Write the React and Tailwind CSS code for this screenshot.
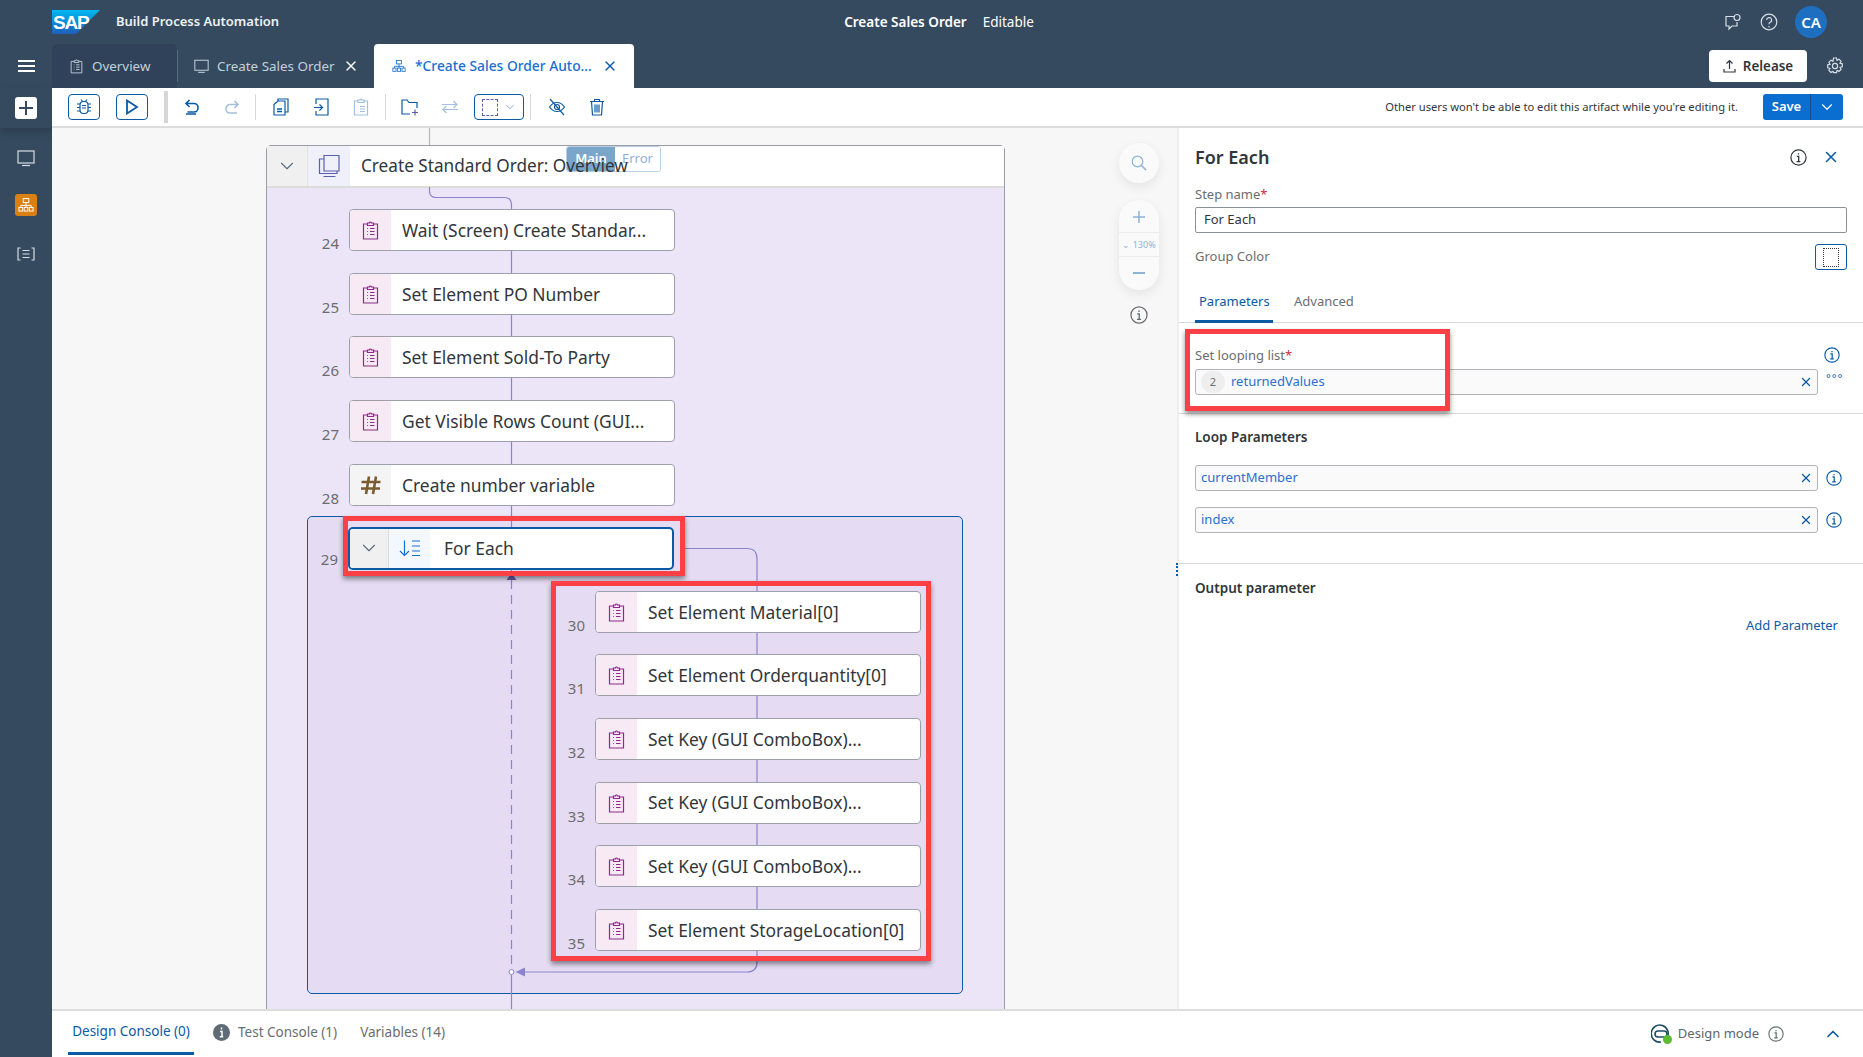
import { ChevronDown, ChevronUp, X } from 'lucide-react';

const STEPS = [
  { n: 24, label: 'Wait (Screen) Create Standar...' },
  { n: 25, label: 'Set Element PO Number' },
  { n: 26, label: 'Set Element Sold-To Party' },
  { n: 27, label: 'Get Visible Rows Count (GUI...' },
];

const LOOP_STEPS = [
  { n: 30, label: 'Set Element Material[0]' },
  { n: 31, label: 'Set Element Orderquantity[0]' },
  { n: 32, label: 'Set Key (GUI ComboBox)...' },
  { n: 33, label: 'Set Key (GUI ComboBox)...' },
  { n: 34, label: 'Set Key (GUI ComboBox)...' },
  { n: 35, label: 'Set Element StorageLocation[0]' },
];

function Svg({ w = 16, h = 16, vb, className = '', children }) {
  return (
    <svg width={w} height={h} viewBox={vb || `0 0 ${w} ${h}`} fill="none" stroke="currentColor" strokeWidth="1.2" className={className}>
      {children}
    </svg>
  );
}

const ClipboardIcon = ({ className = 'text-[#8d2a8b]', w = 17, h = 20 }) => (
  <Svg w={w} h={h} vb="0 0 17 20" className={className}>
    <path d="M5.5 4H1.5v15h14V4h-4" />
    <path d="M5.5 5.5V3h2a1 1 0 0 1 2 0h2v2.5z" />
    <path d="M5 8.5h.8M5 11.5h.8M5 14.5h.8M8 8.5h4.5M8 11.5h4.5M8 14.5h4.5" />
  </Svg>
);

const InfoIcon = ({ className = 'text-[#0a5aa5]', size = 17 }) => (
  <Svg w={size} h={size} vb="0 0 17 17" className={className}>
    <circle cx="8.5" cy="8.5" r="7.6" />
    <path d="M8.5 4.2v1.4M6.8 7.4h1.9v5M6.6 12.6h3.8" strokeWidth="1.3" />
  </Svg>
);

const HierarchyIcon = ({ className = '', w = 20, h = 20 }) => (
  <Svg w={w} h={h} vb="0 0 20 20" className={className}>
    <rect x="6.5" y="2" width="7" height="5" />
    <path d="M10 7v3.5M3.5 13v-2.5h13V13M10 10.5V13" />
    <rect x="1.2" y="13" width="4.6" height="4.6" />
    <rect x="7.7" y="13" width="4.6" height="4.6" />
    <rect x="14.2" y="13" width="4.6" height="4.6" />
  </Svg>
);

const MonitorIcon = ({ className = '', w = 18, h = 17 }) => (
  <Svg w={w} h={h} vb="0 0 18 17" className={className}>
    <rect x="1" y="1" width="16" height="12" />
    <path d="M5 15.5h8" />
  </Svg>
);

function Step({ n, label }) {
  return (
    <div className="flex items-end">
      <span className="relative top-[2px] w-[40px] pr-[10px] text-right text-[15px] leading-5 text-[#6a6d70]">{n}</span>
      <div className="relative z-10 flex h-[42px] w-[326px] overflow-hidden rounded-[4px] border-[1.5px] border-[#9ca0a8] bg-white">
        <div className="flex w-[41px] shrink-0 items-center justify-center bg-[#f8eaf5]">
          <ClipboardIcon />
        </div>
        <span className="flex items-center whitespace-nowrap pl-[11px] text-[17.4px] text-[#32363a]">{label}</span>
      </div>
    </div>
  );
}

function ToolIcon({ children, className = 'text-[#0a5aa5]' }) {
  return <div className={`flex h-[26px] w-[40px] items-center justify-center ${className}`}>{children}</div>;
}

function ToolSep({ className = '' }) {
  return <div className={`h-[26px] w-px bg-[#d9d9d9] ${className}`} />;
}

function ValueField({ children }) {
  return (
    <div className="flex h-[26px] w-[623px] items-center rounded-[3px] border border-[#b0b3b8] bg-[#fafafa] pl-[5px] pr-[4px] text-[13px] text-[#2b6fd0]">
      {children}
      <X size={14} strokeWidth={2.2} className="ml-auto text-[#0a5aa5]" />
    </div>
  );
}

function Canvas() {
  return (
    <div className="relative flex-1 overflow-hidden bg-[#f7f7f7]">
      {/* connectors */}
      <svg className="absolute left-0 top-[-1px] z-[1]" width="1125" height="882" fill="none" stroke="#8b83cc" strokeWidth="1.2">
        <path d="M377.5 0V18" stroke="#b9b9b9" />
        <path d="M377.5 60V64Q377.5 70.5 384 70.5H452Q459.5 70.5 459.5 78V82" />
        <path d="M459.5 82V449" />
        <path d="M459.5 453V845" strokeDasharray="9 6" />
        <path d="M459.5 848V882" />
        <path d="M633 421.5H695Q705 421.5 705 431.5V835Q705 845 695 845H472" />
        <path d="M473 840.5V849.5L463.5 845z" fill="#8b83cc" stroke="none" />
        <path d="M459.5 446L464.5 453H454.5z" fill="#6a5fa8" stroke="none" />
        <circle cx="459.5" cy="845" r="2.5" fill="#fff" strokeWidth="1" />
      </svg>

      <div className="ml-[214px] mt-[17px] h-[900px] w-[739px] rounded-t-[5px] border-[1.5px] border-[#9a9ca6] bg-[#ece5f7]">
        {/* group header */}
        <div className="relative flex h-[42px] border-b-2 border-[#dcdcdc] bg-white">
          <div className="flex w-[41px] items-center justify-center border-r border-[#dfdfdf] bg-[#f0f0f0] text-[#5b6b7b]">
            <ChevronDown size={22} strokeWidth={1.2} />
          </div>
          <div className="flex w-[42px] items-center justify-center bg-[#eff0fa] text-[#5a5fb0]">
            <Svg w={22} h={24} vb="0 0 22 24">
              <path d="M6 1.5h15v15.500H6z" />
              <path d="M6 5H1.500v14.500H19V17M5.500 22.500h12" />
            </Svg>
          </div>
          <span className="relative z-10 flex items-center whitespace-nowrap pl-[11px] text-[17.2px] text-[#32363a]">Create Standard Order: Overview</span>
          <div className="absolute left-[299px] top-0 flex h-[26px] w-[95px] overflow-hidden rounded-[3px] border border-[#b8cfe6] text-[13px]">
            <span className="flex w-[48px] items-center justify-center bg-[#7ba6cc] font-semibold text-white">Main</span>
            <span className="flex flex-1 items-center justify-center bg-white text-[#8fb0d8]">Error</span>
          </div>
        </div>

        {/* steps */}
        <div className="flex flex-col gap-[21.7px] pl-[42px] pt-[21px]">
          {STEPS.map((s) => <Step key={s.n} {...s} />)}
          <div className="flex items-end">
            <span className="relative top-[2px] w-[40px] pr-[10px] text-right text-[15px] leading-5 text-[#6a6d70]">28</span>
            <div className="relative z-10 flex h-[42px] w-[326px] overflow-hidden rounded-[4px] border-[1.5px] border-[#9ca0a8] bg-white">
              <div className="flex w-[41px] shrink-0 items-center justify-center bg-[#f4f4f4] text-[#7a5c30]">
                <Svg w={22} h={22} vb="0 0 22 22">
                  <path d="M1.500 8h19M1 14.500h19M9 2.500L6 20M16 2.500L13 20" strokeWidth="2.6" />
                </Svg>
              </div>
              <span className="flex items-center whitespace-nowrap pl-[11px] text-[17.4px] text-[#32363a]">Create number variable</span>
            </div>
          </div>
        </div>

        {/* for each loop */}
        <div className="ml-[40px] mt-[10px] h-[478px] w-[656px] rounded-[5px] border-[1.5px] border-[#0a5aa5] bg-[#e5dcf4] pt-[10px]">
          <div className="flex items-end">
            <span className="relative top-[-1px] w-[40px] pr-[10px] text-right text-[15px] leading-5 text-[#6a6d70]">29</span>
            <div className="relative z-10 flex h-[43px] w-[326px] overflow-hidden rounded-[5px] border-[2.500px] border-[#0a5aa5] bg-white">
              <div className="flex w-[39px] shrink-0 items-center justify-center border-r border-[#dcdcdc] bg-[#f0f0f0] text-[#5b6b7b]">
                <ChevronDown size={22} strokeWidth={1.2} />
              </div>
              <div className="flex w-[41px] shrink-0 items-center justify-center bg-[#f2f8fe] text-[#1a6fd0]">
                <Svg w={22} h={18} vb="0 0 22 18">
                  <path d="M5.500 1.500v15M1 12l4.500 4.500L10 12M13 2h8M13 7h8M13 12h8M13 16.500h8" />
                </Svg>
              </div>
              <span className="flex items-center pl-[14px] text-[17.4px] text-[#32363a]">For Each</span>
            </div>
          </div>
          <div className="ml-[247px] mt-[21px] flex flex-col gap-[21.6px]">
            {LOOP_STEPS.map((s) => <Step key={s.n} {...s} />)}
          </div>
        </div>
      </div>

      {/* annotations */}
      <div className="absolute left-[291px] top-[388px] z-20 h-[60px] w-[342px] border-[5px] border-[#fb4146] shadow-[0_3px_5px_rgba(0,0,0,0.45)]" />
      <div className="absolute left-[499px] top-[453px] z-20 h-[380px] w-[380px] border-[5px] border-[#fb4146] shadow-[0_3px_5px_rgba(0,0,0,0.45)]" />

      {/* zoom controls */}
      <div className="absolute left-[1067px] top-[15px] flex h-[40px] w-[40px] items-center justify-center rounded-full bg-[#fafafa] text-[#8cb3d9] shadow-[0_4px_12px_rgba(0,0,0,0.08)]">
        <Svg w={16} h={16}>
          <circle cx="6.500" cy="6.500" r="5.300" />
          <path d="M10.500 10.500L15 15" strokeWidth="1.6" />
        </Svg>
      </div>
      <div className="absolute left-[1067px] top-[72px] flex h-[90px] w-[40px] flex-col rounded-full bg-[#fafafa] text-[#8cb3d9] shadow-[0_4px_12px_rgba(0,0,0,0.08)]">
        <div className="flex h-[32px] items-center justify-center pt-[2px]">
          <Svg w={12} h={12}><path d="M6 0v12M0 6h12" strokeWidth="1.5" /></Svg>
        </div>
        <div className="flex h-[25px] items-center justify-center whitespace-nowrap border-y border-[#ececec] text-[9px]">⌄ 130%</div>
        <div className="flex flex-1 items-center justify-center pb-[2px]">
          <Svg w={12} h={12}><path d="M0 6h12" strokeWidth="2" /></Svg>
        </div>
      </div>
      <InfoIcon className="absolute left-[1078px] top-[178px] text-[#6a6d70]" size={18} />
    </div>
  );
}

function Panel() {
  return (
    <div className="relative w-[686px] shrink-0 border-l-2 border-[#eeeeee] bg-white text-[#32363a]">
      <div className="flex items-center pl-[16px] pr-[23px] pt-[18px]">
        <h2 className="text-[18px] font-semibold leading-[22px]">For Each</h2>
        <InfoIcon className="ml-auto" />
        <X size={18} strokeWidth={2} className="ml-[15px] text-[#0a5aa5]" />
      </div>

      <div className="px-[16px]">
        <div className="mt-[16px] text-[13px] leading-[20px] text-[#6a6d70]">Step name<span className="text-[#c9303c]">*</span></div>
        <div className="mt-[3px] flex h-[26px] items-center rounded-[2px] border border-[#89919a] pl-[8px] text-[13px]">For Each</div>
        <div className="mt-[11px] flex items-center justify-between">
          <span className="text-[13px] text-[#6a6d70]">Group Color</span>
          <button className="flex h-[26px] w-[32px] items-center justify-center rounded-[3px] border border-[#0a5aa5]">
            <span className="h-[19px] w-[16px] border border-dotted border-[#32363a]" />
          </button>
        </div>
      </div>

      <div className="mt-[12px] flex h-[41px] gap-[21px] border-b border-[#d9d9d9] pl-[16px] text-[13px]">
        <div className="h-[41px] w-[78px] border-b-[3px] border-[#0a5aa5] pl-[4px] pt-[10px] text-[#0a5aa5]">Parameters</div>
        <div className="pt-[10px] text-[#6a6d70]">Advanced</div>
      </div>

      <div className="border-b border-[#d9d9d9] px-[16px] pb-[18px] pt-[22px]">
        <div className="flex items-center justify-between pr-[7px]">
          <span className="text-[13px] leading-[20px] text-[#6a6d70]">Set looping list<span className="text-[#c9303c]">*</span></span>
          <InfoIcon size={16} />
        </div>
        <div className="mt-[4px] flex items-center">
          <ValueField>
            <span className="mr-[6px] flex h-[22px] w-[24px] items-center justify-center rounded-full bg-[#eeeeee] text-[11px] text-[#6a6d70]">2</span>
            returnedValues
          </ValueField>
          <span className="ml-[8px] mt-[-9px] text-[11px] leading-none tracking-[1px] text-[#0a5aa5]">°°°</span>
        </div>
      </div>

      <div className="h-[150px] border-b border-[#d9d9d9] px-[16px] pt-[13px]">
        <h3 className="text-[13.500px] font-semibold leading-[20px]">Loop Parameters</h3>
        <div className="mt-[18px] flex items-center gap-[8px]">
          <ValueField>currentMember</ValueField>
          <InfoIcon size={16} />
        </div>
        <div className="mt-[16px] flex items-center gap-[8px]">
          <ValueField>index</ValueField>
          <InfoIcon size={16} />
        </div>
      </div>

      <div className="px-[16px] pt-[14px]">
        <h3 className="text-[13.500px] font-semibold leading-[20px]">Output parameter</h3>
        <div className="mt-[17px] pr-[9px] text-right text-[13px] leading-[20px] text-[#0a5aa5]">Add Parameter</div>
      </div>

      {/* annotation */}
      <div className="absolute left-[6px] top-[201px] h-[82px] w-[265px] border-[5px] border-[#fb4146] shadow-[0_3px_5px_rgba(0,0,0,0.45)]" />
      {/* resize handle */}
      <div className="absolute left-[-3px] top-[435px] h-[13px] w-[2px] border-l-2 border-dotted border-[#0a5aa5]" />
    </div>
  );
}

export default function App() {
  return (
    <div className="flex h-screen w-full flex-col overflow-hidden bg-[#354a5f] font-['Noto_Sans',sans-serif]">
      {/* Shell bar */}
      <header className="grid h-[44px] shrink-0 grid-cols-[1fr_auto_1fr] items-center text-white">
        <div className="flex items-center pl-[52px]">
          <svg width="48" height="24" viewBox="0 0 48 24">
            <defs>
              <linearGradient id="sap" x1="0" y1="0" x2="0" y2="1">
                <stop offset="0" stopColor="#00b8f1" />
                <stop offset="1" stopColor="#1e5fbb" />
              </linearGradient>
            </defs>
            <path d="M0 0H48L24 24H0z" fill="url(#sap)" />
            <text x="1" y="19" fill="#fff" fontSize="19" fontWeight="700" fontFamily="Liberation Sans" letterSpacing="-1.2">SAP</text>
          </svg>
          <span className="ml-[16px] text-[13px] font-semibold text-[#eef1f4]">Build Process Automation</span>
        </div>
        <div className="flex items-center gap-[16px] pl-[15px] text-[13.5px]">
          <span className="font-semibold">Create Sales Order</span>
          <span>Editable</span>
        </div>
        <div className="flex items-center justify-end pr-[36px]">
          <Svg w={18} h={18} className="text-[#d5dde6]">
            <path d="M11 3.500H2v9.500h3v3l3-3h5V9" />
            <circle cx="13" cy="4.500" r="3" />
          </Svg>
          <Svg w={18} h={18} className="ml-[18px] text-[#d5dde6]">
            <circle cx="9" cy="9" r="7.800" />
            <path d="M6.600 7a2.500 2.500 0 1 1 3.600 2.300c-.9.500-1.200 1-1.200 2M9 13v1.400" />
          </Svg>
          <div className="ml-[17px] flex h-[32px] w-[32px] items-center justify-center rounded-full bg-[#1e6fc0] text-[15px] font-semibold">CA</div>
        </div>
      </header>

      {/* Tabs */}
      <div className="flex h-[44px] shrink-0 items-stretch text-[13.4px]">
        <div className="flex w-[52px] items-center justify-center">
          <div className="flex h-[12px] w-[17px] flex-col justify-between">
            <span className="h-[2px] bg-white" /><span className="h-[2px] bg-white" /><span className="h-[2px] bg-white" />
          </div>
        </div>
        <div className="flex w-[125px] items-center rounded-t-[5px] bg-[#2f4259] pl-[18px] text-[#c4d0dc]">
          <ClipboardIcon className="text-[#c4d0dc]" w={13} h={16} />
          <span className="ml-[9px]">Overview</span>
        </div>
        <div className="my-[6px] w-px bg-[#5a6c7e]" />
        <div className="flex w-[196px] items-center pl-[16px] text-[#c4d0dc]">
          <MonitorIcon w={15} h={15} />
          <span className="ml-[8px] whitespace-nowrap">Create Sales Order</span>
          <X size={16} strokeWidth={2} className="ml-[9px] text-white" />
        </div>
        <div className="flex w-[260px] items-center rounded-t-[4px] bg-white pl-[18px] text-[#1a6fd0]">
          <HierarchyIcon w={14} h={14} />
          <span className="ml-[9px] whitespace-nowrap text-[13.8px] font-medium">*Create Sales Order Auto...</span>
          <X size={16} strokeWidth={2} className="ml-auto mr-[16px] text-[#0a5aa5]" />
        </div>
        <div className="ml-auto flex items-center pr-[19px]">
          <button className="flex h-[32px] w-[98px] items-center justify-center gap-[7px] rounded-[4px] bg-white font-semibold text-[#32363a]">
            <Svg w={13} h={14}>
              <path d="M6.500 10V1.500M3.500 4.500l3-3 3 3M1 10v3h11v-3" />
            </Svg>
            Release
          </button>
          <Svg w={18} h={18} className="ml-[19px] text-[#d5dde6]">
            <circle cx="9" cy="9" r="2.600" />
            <path d="M7.500 1h3l.5 2.300 2-1.100 2.100 2.100-1.100 2 2.300.5v3l-2.300.5 1.100 2-2.100 2.100-2-1.100-.5 2.300h-3L7 14.300l-2 1.100-2.100-2.100 1.100-2-2.300-.5v-3L4 7.300l-1.100-2L5 3.200l2 1.100z" />
          </Svg>
        </div>
      </div>

      <div className="flex min-h-0 flex-1">
        {/* Side navigation */}
        <nav className="flex w-[52px] shrink-0 flex-col items-center">
          <div className="flex h-[40px] w-full items-center justify-center shadow-[0_4px_8px_rgba(0,0,0,0.18)]">
            <div className="flex h-[22px] w-[22px] items-center justify-center rounded-[3px] bg-white text-[#354a5f]">
              <Svg w={14} h={14}><path d="M7 0v14M0 7h14" strokeWidth="2" /></Svg>
            </div>
          </div>
          <MonitorIcon className="mt-[22px] text-[#d5dde6]" />
          <div className="mt-[27px] flex h-[22px] w-[22px] items-center justify-center rounded-[3px] bg-[#d98013] text-white">
            <HierarchyIcon w={16} h={16} />
          </div>
          <Svg w={18} h={14} className="mt-[31px] text-[#d5dde6]">
            <path d="M3.500 1H1v12h2.500M14.500 1H17v12h-2.500M5.500 3.500h7M5.500 7h7M5.500 10.500h7" />
          </Svg>
        </nav>

        <div className="flex min-w-0 flex-1 flex-col bg-white">
          {/* Toolbar */}
          <div className="flex h-[40px] shrink-0 items-center border-b-2 border-[#dddddd] pl-[16px] pr-[20px]">
            <button className="flex h-[26px] w-[32px] items-center justify-center rounded-[4px] border border-[#0a5aa5] text-[#0a5aa5]">
              <Svg w={18} h={18}>
                <rect x="5" y="3.500" width="8" height="12" rx="3.500" />
                <path d="M6 1.500l1.500 2M12 1.500l-1.500 2M2 6h3M2 9.500h3M2 13h3M13 6h3M13 9.500h3M13 13h3M7 7.500h4M7 10h4" />
              </Svg>
            </button>
            <button className="ml-[16px] flex h-[26px] w-[32px] items-center justify-center rounded-[4px] border border-[#0a5aa5] text-[#0a5aa5]">
              <Svg w={14} h={16}><path d="M2 1.500L12 8 2 14.500z" strokeWidth="1.8" /></Svg>
            </button>
            <div className="ml-[16px] mr-[4px] h-[32px] w-[4px] bg-[#d6d6d6]" />
            <ToolIcon>
              <Svg w={16} h={16} className="text-[#0a5aa5]"><path d="M5.500 1L2 4.500 5.500 8M2 4.500h8a4 4 0 0 1 4 4V9a4 4 0 0 1-4 4H3.500M2 15h10" strokeWidth="1.6" /></Svg>
            </ToolIcon>
            <ToolIcon className="text-[#a3c1de]">
              <Svg w={16} h={16}><path d="M10.500 2L14 5.500 10.500 9M14 5.500H6a4 4 0 0 0-4 4V10a4 4 0 0 0 4 4h7" strokeWidth="1.6" /></Svg>
            </ToolIcon>
            <ToolSep className="ml-[3px] mr-[5px]" />
            <ToolIcon>
              <Svg w={16} h={18}>
                <path d="M5 3V1h10v13h-3" />
                <path d="M1 6.500L5 3h7v14H1z" />
                <path d="M4 11h5M4 13.500h5" strokeWidth="1.4" />
              </Svg>
            </ToolIcon>
            <ToolIcon>
              <Svg w={16} h={18}>
                <path d="M3 6V1h12v16H3v-4" />
                <path d="M1 9.500h8M6.500 6.500l3 3-3 3" />
              </Svg>
            </ToolIcon>
            <ToolIcon className="text-[#a3c1de]">
              <Svg w={16} h={18}>
                <path d="M5 3H1.500v14h13V3H11M5 4.500V2h2a1 1 0 0 1 2 0h2v2.500z" />
                <path d="M7 8.500h5M7 11h5M7 13.500h5" />
              </Svg>
            </ToolIcon>
            <ToolSep className="mx-[4px]" />
            <ToolIcon>
              <Svg w={18} h={17}>
                <path d="M9 15H1V1h5l2 2.500h8V9" />
                <path d="M14 10.500v6M11 13.500h6" className="text-[#5a5fb0]" />
              </Svg>
            </ToolIcon>
            <ToolIcon className="text-[#a3c1de]">
              <Svg w={18} h={16}>
                <path d="M1 5.500h15M12.500 2L16 5.500 12.500 9M17 10.500H2M5.500 7L2 10.500 5.500 14" />
              </Svg>
            </ToolIcon>
            <button className="ml-[4px] flex h-[26px] w-[50px] shrink-0 items-center justify-center gap-[5px] rounded-[4px] border border-[#0a5aa5]">
              <span className="h-[17px] w-[16px] border border-dashed border-[#5a5fb0]" />
              <ChevronDown size={14} strokeWidth={1.4} className="text-[#6f9ccb]" />
            </button>
            <ToolSep className="mx-[6px]" />
            <ToolIcon>
              <Svg w={18} h={18}>
                <path d="M1.500 9c2-3 4.500-4.500 7.500-4.500S14.500 6 16.500 9c-2 3-4.500 4.500-7.500 4.500S3.500 12 1.500 9z" />
                <circle cx="9" cy="9" r="2.500" />
                <path d="M2 1l14 16" />
              </Svg>
            </ToolIcon>
            <ToolIcon>
              <Svg w={16} h={18}>
                <path d="M1 3.500h14M5.500 3.500V1.500h5v2M2.500 3.500L3.500 17h9l1-13.500M6 6.500v8M8 6.500v8M10 6.500v8" />
              </Svg>
            </ToolIcon>
            <span className="ml-auto whitespace-nowrap text-[11.2px] text-[#32363a]">Other users won't be able to edit this artifact while you're editing it.</span>
            <div className="ml-[25px] flex h-[26px] w-[80px] overflow-hidden rounded-[3px] bg-[#0a6ed1] text-[13px] font-semibold text-white">
              <span className="flex w-[48px] items-center justify-center border-r border-[#0a4f96]">Save</span>
              <span className="flex flex-1 items-center justify-center"><ChevronDown size={18} strokeWidth={1.5} /></span>
            </div>
          </div>

          <div className="flex min-h-0 flex-1">
            <Canvas />
            <Panel />
          </div>

          {/* Console tabs */}
          <div className="flex h-[48px] shrink-0 items-stretch border-t-2 border-[#dddddd] bg-white pl-[16px] pr-[20px] text-[13.5px] text-[#6a6d70]">
            <div className="flex h-[44px] w-[126px] items-center justify-center whitespace-nowrap border-b-[3px] border-[#0a5aa5] text-[#0a5aa5]">Design Console (0)</div>
            <div className="ml-[19px] flex items-center gap-[8px] pb-[3px]">
              <svg width="17" height="17" viewBox="0 0 17 17">
                <circle cx="8.500" cy="8.500" r="8.500" fill="#5f6b76" />
                <path d="M8.500 3.500v2M7 7.500h2v5M6.800 12.800h3.400" stroke="#fff" strokeWidth="1.500" fill="none" />
              </svg>
              Test Console (1)
            </div>
            <div className="ml-[23px] flex items-center pb-[3px]">Variables (14)</div>
            <div className="ml-auto flex items-center">
              <div className="relative h-[20px] w-[21px] text-[#1f4d68]">
                <Svg w={20} h={20} className="text-[#1f4d68]">
                  <path d="M16 14A8.500 8.500 0 1 0 10 18" strokeWidth="1.600" />
                  <rect x="4" y="7" width="12" height="6" rx="3" strokeWidth="1.600" />
                </Svg>
                <span className="absolute bottom-0 right-0 h-[9px] w-[9px] rounded-full bg-[#5dbb2f]" />
              </div>
              <span className="ml-[6px] text-[13px] text-[#5b6570]">Design mode</span>
              <InfoIcon className="ml-[9px]" size={16} />
              <ChevronUp size={20} strokeWidth={2} className="ml-[39px] text-[#0a5aa5]" />
            </div>
          </div>
        </div>
      </div>
    </div>
  );
}
